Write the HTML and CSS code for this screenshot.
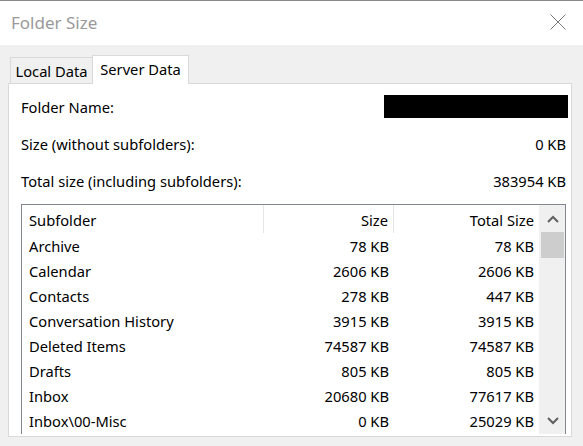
FILE: index.html
```html
<!DOCTYPE html>
<html>
<head>
<meta charset="utf-8">
<link rel="stylesheet" href="styles.css">
</head>
<body>
<div class="window">
  <div class="titlebar">
    <span class="title">Folder Size</span>
    <svg class="close" width="16" height="16" viewBox="0 0 16 16"><path d="M0.5 0.5 L15.5 15.5 M15.5 0.5 L0.5 15.5" stroke="#7a7a7a" stroke-width="1" fill="none"/></svg>
  </div>
  <div class="body">
    <div class="tabs">
      <div class="tab">Local Data</div>
      <div class="tab active">Server Data</div>
    </div>
    <div class="panel">
      <div class="field">
        <span>Folder Name:</span>
        <span class="redacted"></span>
      </div>
      <div class="field">
        <span>Size (without subfolders):</span>
        <span class="val">0 KB</span>
      </div>
      <div class="field">
        <span>Total size (including subfolders):</span>
        <span class="val">383954 KB</span>
      </div>
      <div class="listbox">
        <div class="list">
          <div class="row head">
            <div class="c1 sep">Subfolder</div>
            <div class="c2 sep">Size</div>
            <div class="c3">Total Size</div>
          </div>
          <div class="row"><div class="c1">Archive</div><div class="c2">78 KB</div><div class="c3">78 KB</div></div>
          <div class="row"><div class="c1">Calendar</div><div class="c2">2606 KB</div><div class="c3">2606 KB</div></div>
          <div class="row"><div class="c1">Contacts</div><div class="c2">278 KB</div><div class="c3">447 KB</div></div>
          <div class="row"><div class="c1">Conversation History</div><div class="c2">3915 KB</div><div class="c3">3915 KB</div></div>
          <div class="row"><div class="c1">Deleted Items</div><div class="c2">74587 KB</div><div class="c3">74587 KB</div></div>
          <div class="row"><div class="c1">Drafts</div><div class="c2">805 KB</div><div class="c3">805 KB</div></div>
          <div class="row"><div class="c1">Inbox</div><div class="c2">20680 KB</div><div class="c3">77617 KB</div></div>
          <div class="row"><div class="c1">Inbox\00-Misc</div><div class="c2">0 KB</div><div class="c3">25029 KB</div></div>
        </div>
        <div class="scrollbar">
          <div class="arrow">
            <svg width="12" height="8" viewBox="0 0 12 8"><path d="M1 7 L6 2 L11 7" stroke="#606060" stroke-width="2" fill="none"/></svg>
          </div>
          <div class="thumb"></div>
          <div class="track"></div>
          <div class="arrow">
            <svg width="12" height="8" viewBox="0 0 12 8"><path d="M1 1 L6 6 L11 1" stroke="#606060" stroke-width="2" fill="none"/></svg>
          </div>
        </div>
      </div>
    </div>
  </div>
</div>
</body>
</html>
```

FILE: styles.css
```css
html, body {
  margin: 0;
  padding: 0;
}
body {
  width: 583px;
  height: 446px;
  overflow: hidden;
  background: #f0f0f0;
  font-family: "Noto Sans", "Open Sans", sans-serif;
  font-size: 14.7px;
  color: #000;
}
.window {
  border-top: 1px solid #8a8a8a;
}
.titlebar {
  height: 44px;
  background: #fff;
  display: flex;
  align-items: center;
  justify-content: space-between;
  padding: 0 17px 0 11px;
}
.title {
  font-size: 17px;
  color: #999;
  margin-top: -2px;
}
.close {
  display: block;
  margin-top: -2px;
}
.body {
  padding: 10px 11px 0 8px;
}
.tabs {
  display: flex;
  align-items: flex-end;
  margin-left: 2px;
  height: 28px;
}
.tab {
  box-sizing: border-box;
  height: 26px;
  width: 83px;
  border: 1px solid #d9d9d9;
  border-bottom: none;
  background: #f0f0f0;
  display: flex;
  align-items: center;
  justify-content: center;
  padding-top: 2px;
  line-height: 1;
}
.tab.active {
  width: 97px;
  height: 29px;
  margin-left: -1px;
  margin-bottom: -1px;
  background: #fff;
  position: relative;
  z-index: 1;
  padding-top: 0;
  padding-bottom: 2px;
}
.panel {
  background: #fff;
  border: 1px solid #d9d9d9;
  padding: 11px 3px 2px 12px;
}
.field {
  height: 23px;
  display: flex;
  align-items: center;
  justify-content: space-between;
  margin-bottom: 14px;
}
.field:nth-child(3) {
  margin-bottom: 12px;
}
.val {
  margin-right: 2px;
}
.redacted {
  width: 184px;
  height: 23px;
  background: #000;
}
.listbox {
  height: 230px;
  box-sizing: border-box;
  border: 1px solid #828790;
  border-bottom: none;
  margin-right: 2px;
  display: flex;
  overflow: hidden;
}
.list {
  flex: 1;
}
.row {
  display: grid;
  grid-template-columns: 243px 129px 1fr;
  height: 25px;
  align-items: center;
}
.row.head {
  height: 28px;
  align-items: stretch;
}
.row > div {
  display: flex;
  align-items: center;
  height: 100%;
}
.head > div {
  padding-top: 1px;
  box-sizing: border-box;
}
.c1 {
  padding-left: 7px;
}
.c2, .c3 {
  justify-content: flex-end;
  padding-right: 5px;
}
.sep {
  border-right: 1px solid #e5e5e5;
}
.head .c1 { width: 242px; box-sizing: border-box; }
.scrollbar {
  width: 26px;
  background: #f0f0f0;
  border-left: 1px solid #f0f0f0;
  display: flex;
  flex-direction: column;
  box-sizing: border-box;
}
.arrow {
  height: 27px;
  display: flex;
  align-items: center;
  justify-content: center;
}
.thumb {
  height: 26px;
  margin: 0 1px;
  background: #cdcdcd;
}
.track {
  flex: 1;
}
```
